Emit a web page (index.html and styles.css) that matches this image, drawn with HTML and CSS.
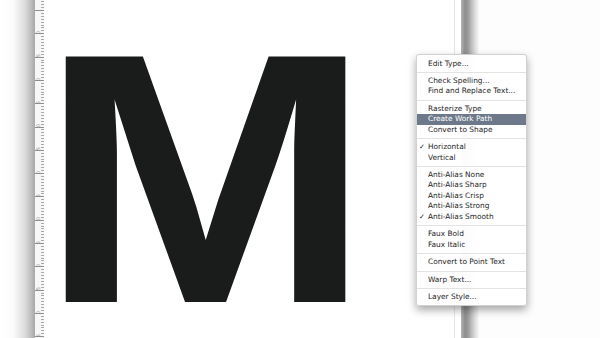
FILE: index.html
```html
<!DOCTYPE html>
<html>
<head>
<meta charset="utf-8">
<link rel="stylesheet" href="styles.css">
</head>
<body>
<div class="workspace">
  <div class="pasteboard-left"></div>
  <div class="ruler">
    <div class="ruler-labels">
      <span>0</span><span>5</span><span>0</span><span>5</span><span>0</span><span>5</span><span>0</span><span>5</span><span>0</span><span>5</span><span>0</span><span>5</span><span>0</span><span>5</span>
    </div>
  </div>
  <div class="canvas">
    <span class="glyph">M</span>
  </div>
  <div class="gutter"></div>
  <div class="edge-shadow"></div>
  <div class="pasteboard-right"></div>
</div>

<ul class="menu">
  <li class="item"><span class="check"></span>Edit Type...</li>
  <li class="sep"></li>
  <li class="item"><span class="check"></span>Check Spelling...</li>
  <li class="item"><span class="check"></span>Find and Replace Text...</li>
  <li class="sep"></li>
  <li class="item"><span class="check"></span>Rasterize Type</li>
  <li class="item active"><span class="check"></span>Create Work Path</li>
  <li class="item"><span class="check"></span>Convert to Shape</li>
  <li class="sep"></li>
  <li class="item"><span class="check">✓</span>Horizontal</li>
  <li class="item"><span class="check"></span>Vertical</li>
  <li class="sep"></li>
  <li class="item"><span class="check"></span>Anti-Alias None</li>
  <li class="item"><span class="check"></span>Anti-Alias Sharp</li>
  <li class="item"><span class="check"></span>Anti-Alias Crisp</li>
  <li class="item"><span class="check"></span>Anti-Alias Strong</li>
  <li class="item"><span class="check">✓</span>Anti-Alias Smooth</li>
  <li class="sep"></li>
  <li class="item"><span class="check"></span>Faux Bold</li>
  <li class="item"><span class="check"></span>Faux Italic</li>
  <li class="sep"></li>
  <li class="item"><span class="check"></span>Convert to Point Text</li>
  <li class="sep"></li>
  <li class="item"><span class="check"></span>Warp Text...</li>
  <li class="sep"></li>
  <li class="item"><span class="check"></span>Layer Style...</li>
</ul>
</body>
</html>
```

FILE: styles.css
```css
html, body {
  margin: 0;
  padding: 0;
  width: 600px;
  height: 338px;
  overflow: hidden;
  background: #ffffff;
}

.workspace {
  display: flex;
  width: 600px;
  height: 338px;
  overflow: hidden;
}

.pasteboard-left {
  width: 35px;
  flex: none;
  background: linear-gradient(to right, #ffffff 0, #fbfbfb 13px, #dcdcdc 25px, #b9b9b9 32px, #a6a6a6 35px);
}

.ruler {
  width: 9px;
  flex: none;
  background-color: #f7f7f7;
  background-image:
    repeating-linear-gradient(to bottom, #8f8f8f 0, #8f8f8f 1px, transparent 1px, transparent 23.3px),
    repeating-linear-gradient(to bottom, #a8a8a8 0, #a8a8a8 1px, transparent 1px, transparent 2.9125px);
  background-size: 9px 100%, 3px 100%;
  background-position: 0 10px, 6px 10px;
  background-repeat: repeat-y, repeat-y;
  display: flex;
  overflow: hidden;
}

.ruler-labels {
  display: flex;
  flex-direction: column;
  padding-top: 11px;
  padding-left: 1px;
}

.ruler-labels span {
  height: 23.3px;
  flex: none;
  font-family: "DejaVu Sans", sans-serif;
  font-size: 5px;
  line-height: 5px;
  color: #8a829c;
  writing-mode: vertical-rl;
  transform: rotate(180deg);
  text-orientation: sideways;
  letter-spacing: 0.5px;
}

.canvas {
  width: 411px;
  height: 338px;
  flex: none;
  background: #ffffff;
  border-right: 1px solid #e6e6e6;
  padding-top: 29.3px;
  box-sizing: border-box;
  overflow: hidden;
}

.glyph {
  display: inline-block;
  font-family: "Liberation Sans", Arial, sans-serif;
  font-weight: bold;
  font-size: 357px;
  line-height: 300px;
  color: #1a1b1b;
  margin-left: -4.7px;
  transform: scaleX(1.12);
  transform-origin: 0 0;
}

.gutter {
  width: 6px;
  flex: none;
  background: #ffffff;
}

.edge-shadow {
  width: 18px;
  flex: none;
  background: linear-gradient(to right, #b4b4b4 0, #8e8e8e 4px, #9a9a9a 7px, #c2c2c2 11px, #e4e4e4 15px, #f8f8f8 18px);
}

.pasteboard-right {
  flex: 1;
  background: #fdfdfd;
}

.menu {
  position: absolute;
  left: 416px;
  top: 54px;
  width: 111px;
  margin: 0;
  padding: 3.5px 0 3px 0;
  list-style: none;
  box-sizing: border-box;
  background: rgba(255, 255, 255, 0.97);
  border: 1px solid rgba(0, 0, 0, 0.18);
  border-radius: 3px;
  box-shadow: 0 4px 9px rgba(0, 0, 0, 0.35);
  font-family: "DejaVu Sans", sans-serif;
  font-size: 7.4px;
  color: #1e1e1e;
}

.item {
  display: flex;
  align-items: center;
  height: 10.45px;
  line-height: 10.45px;
  padding-left: 2px;
  white-space: nowrap;
}

.check {
  width: 9px;
  flex: none;
  font-size: 7px;
}

.item.active {
  background: #6d798b;
  color: #ffffff;
}

.sep {
  height: 1px;
  margin: 3px 0 3px 0;
  background: #e3e3e3;
}
```
